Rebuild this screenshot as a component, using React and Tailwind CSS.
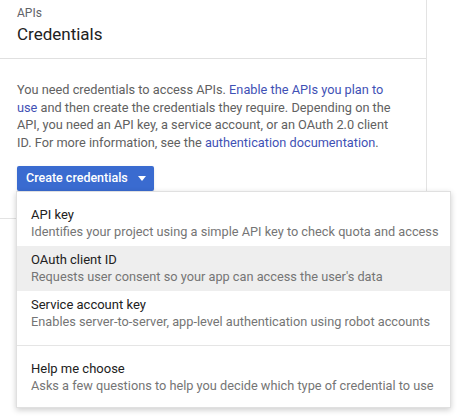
import React from 'react'

const items = [
  { title: 'API key', desc: 'Identifies your project using a simple API key to check quota and access' },
  { title: 'OAuth client ID', desc: "Requests user consent so your app can access the user's data", active: true },
  { title: 'Service account key', desc: 'Enables server-to-server, app-level authentication using robot accounts' },
]

function MenuItem({ title, desc, active }) {
  return (
    <div className={active ? 'px-[14px] py-[5px] bg-[#eeeeee]' : 'px-[14px] py-[5px]'}>
      <div className="text-[13px] leading-[17px] text-[#212121]">{title}</div>
      <div className="text-[12.75px] leading-[18px] text-[#757575] whitespace-nowrap">{desc}</div>
    </div>
  )
}

export default function App() {
  return (
    <div
      className="relative w-[474px] h-[416px] bg-white overflow-hidden"
      style={{ fontFamily: 'Roboto, "Liberation Sans", sans-serif' }}
    >
      {/* Page panel */}
      <div className="w-[427px] h-[219px] border-r border-b border-[#e3e3e3]">
        <div className="h-[59px] border-b border-[#e0e0e0] px-[17px] pt-[5px]">
          <div className="text-[12px] leading-[16px] text-[#5f6368]">APIs</div>
          <div className="text-[17px] leading-[26px] text-[#212121]">Credentials</div>
        </div>
        <div className="px-[17px] pt-[22px]">
          <p className="text-[12.75px] leading-[17.5px] text-[#616161] whitespace-nowrap">
            You need credentials to access APIs.{' '}
            <span className="text-[#3f51b5]">Enable the APIs you plan to</span>
            <br />
            <span className="text-[#3f51b5]">use</span> and then create the credentials they require. Depending on the
            <br />
            API, you need an API key, a service account, or an OAuth 2.0 client
            <br />
            ID. For more information, see the{' '}
            <span className="text-[#3f51b5]">authentication documentation</span>.
          </p>
          <button className="mt-[15px] flex items-center h-[25px] w-[137px] pl-[9px] rounded-[2px] bg-[#3a6bd0] text-white text-[12.5px] font-medium whitespace-nowrap shadow-sm">
            Create credentials
            <svg className="ml-[10px]" width="8" height="5" viewBox="0 0 8 5">
              <path d="M0 0h8L4 5z" fill="white" />
            </svg>
          </button>
        </div>
      </div>

      {/* Dropdown menu */}
      <div className="absolute left-[16px] top-[191px] w-[435px] bg-white border border-[#e0e0e0] shadow-[0_2px_6px_rgba(0,0,0,0.2)]">
        <div className="pt-[9px] pb-[9px]">
          {items.map((it) => (
            <MenuItem key={it.title} {...it} />
          ))}
        </div>
        <div className="h-px bg-[#e5e5e5]" />
        <div className="pt-[9px] pb-[7px]">
          <MenuItem
            title="Help me choose"
            desc="Asks a few questions to help you decide which type of credential to use"
          />
        </div>
      </div>
    </div>
  )
}
